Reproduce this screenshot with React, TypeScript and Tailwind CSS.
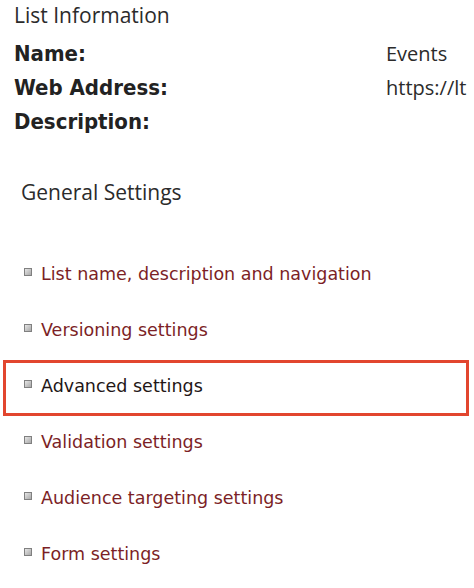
import React from "react";

const links = [
  "List name, description and navigation",
  "Versioning settings",
  "Advanced settings",
  "Validation settings",
  "Audience targeting settings",
  "Form settings",
];

function Bullet() {
  return (
    <span className="inline-block w-[8px] h-[8px] mb-[4px] mr-[9px] border border-[#808080] bg-gradient-to-br from-[#e6e6e6] to-[#a9a9a9] shrink-0" />
  );
}

export default function App() {
  return (
    <div className="w-[474px] h-[588px] overflow-hidden bg-white">
      <div className="pl-[14px]">
        <div className="pt-[1px] text-[21px] leading-[28px] text-[#2b2b2b] font-['Open_Sans',sans-serif] whitespace-nowrap">
          List Information
        </div>
        <div className="mt-[7.5px] grid grid-cols-[372px_1fr] whitespace-nowrap">
          <div className="font-['DejaVu_Sans_Condensed','Liberation_Sans',sans-serif] font-bold text-[22px] leading-[34px] text-[#222]">
            Name:
          </div>
          <div className="font-['Open_Sans',sans-serif] text-[20px] leading-[34px] text-[#2b2b2b]">
            Events
          </div>
          <div className="font-['DejaVu_Sans_Condensed','Liberation_Sans',sans-serif] font-bold text-[22px] leading-[34px] text-[#222]">
            Web Address:
          </div>
          <div className="font-['Open_Sans',sans-serif] text-[20px] leading-[34px] text-[#2b2b2b] overflow-hidden">
            https://lt
          </div>
          <div className="font-['DejaVu_Sans_Condensed','Liberation_Sans',sans-serif] font-bold text-[22px] leading-[34px] text-[#222]">
            Description:
          </div>
          <div />
        </div>
        <div className="mt-[39px] pl-[7px] text-[21px] leading-[28px] text-[#2b2b2b] font-['Open_Sans',sans-serif] whitespace-nowrap">
          General Settings
        </div>
      </div>
      <ul className="mt-[40.5px] font-['DejaVu_Sans','Verdana',sans-serif] text-[17.5px] whitespace-nowrap">
        {links.map((t, i) =>
          i === 2 ? (
            <li
              key={t}
              className="mt-[2px] -mb-[2px] ml-[3px] w-[466px] h-[56px] border-[3px] border-[#e2462f] pl-[18px] leading-[46px] text-[#231616]"
            >
              <Bullet />
              <span>{t}</span>
            </li>
          ) : (
            <li key={t} className="h-[56px] pl-[24px] leading-[56px] text-[#7c1f26]">
              <Bullet />
              <span>{t}</span>
            </li>
          )
        )}
      </ul>
    </div>
  );
}
